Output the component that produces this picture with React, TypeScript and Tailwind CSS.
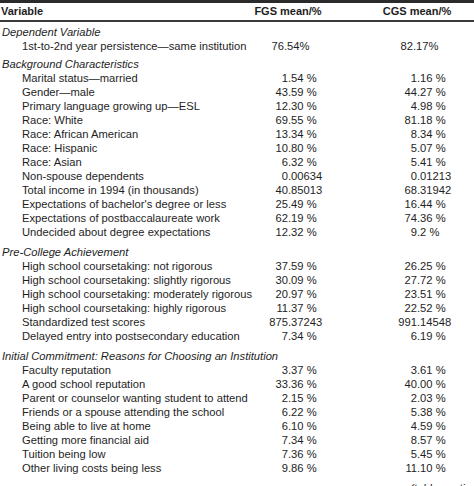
import React from "react";

type Row = { label: string; fgs: string; cgs: string; tight?: boolean };
type Section = { title: string; mt: string; rows: Row[] };

const sections: Section[] = [
  {
    title: "Dependent Variable",
    mt: "mt-[3px]",
    rows: [{ label: "1st-to-2nd year persistence—same institution", fgs: "76.54%", cgs: "82.17%", tight: true }],
  },
  {
    title: "Background Characteristics",
    mt: "mt-[4px]",
    rows: [
      { label: "Marital status—married", fgs: "1.54 %", cgs: "1.16 %" },
      { label: "Gender—male", fgs: "43.59 %", cgs: "44.27 %" },
      { label: "Primary language growing up—ESL", fgs: "12.30 %", cgs: "4.98 %" },
      { label: "Race: White", fgs: "69.55 %", cgs: "81.18 %" },
      { label: "Race: African American", fgs: "13.34 %", cgs: "8.34 %" },
      { label: "Race: Hispanic", fgs: "10.80 %", cgs: "5.07 %" },
      { label: "Race: Asian", fgs: "6.32 %", cgs: "5.41 %" },
      { label: "Non-spouse dependents", fgs: "0.00634", cgs: "0.01213" },
      { label: "Total income in 1994 (in thousands)", fgs: "40.85013", cgs: "68.31942" },
      { label: "Expectations of bachelor's degree or less", fgs: "25.49 %", cgs: "16.44 %" },
      { label: "Expectations of postbaccalaureate work", fgs: "62.19 %", cgs: "74.36 %" },
      { label: "Undecided about degree expectations", fgs: "12.32 %", cgs: "9.2 %" },
    ],
  },
  {
    title: "Pre-College Achievement",
    mt: "mt-[6px]",
    rows: [
      { label: "High school coursetaking: not rigorous", fgs: "37.59 %", cgs: "26.25 %" },
      { label: "High school coursetaking: slightly rigorous", fgs: "30.09 %", cgs: "27.72 %" },
      { label: "High school coursetaking: moderately rigorous", fgs: "20.97 %", cgs: "23.51 %" },
      { label: "High school coursetaking: highly rigorous", fgs: "11.37 %", cgs: "22.52 %" },
      { label: "Standardized test scores", fgs: "875.37243", cgs: "991.14548" },
      { label: "Delayed entry into postsecondary education", fgs: "7.34 %", cgs: "6.19 %" },
    ],
  },
  {
    title: "Initial Commitment: Reasons for Choosing an Institution",
    mt: "mt-[6px]",
    rows: [
      { label: "Faculty reputation", fgs: "3.37 %", cgs: "3.61 %" },
      { label: "A good school reputation", fgs: "33.36 %", cgs: "40.00 %" },
      { label: "Parent or counselor wanting student to attend", fgs: "2.15 %", cgs: "2.03 %" },
      { label: "Friends or a spouse attending the school", fgs: "6.22 %", cgs: "5.38 %" },
      { label: "Being able to live at home", fgs: "6.10 %", cgs: "4.59 %" },
      { label: "Getting more financial aid", fgs: "7.34 %", cgs: "8.57 %" },
      { label: "Tuition being low", fgs: "7.36 %", cgs: "5.45 %" },
      { label: "Other living costs being less", fgs: "9.86 %", cgs: "11.10 %" },
    ],
  },
];

function split(v: string): [string, string] {
  const i = v.indexOf(".");
  return [v.slice(0, i), v.slice(i)];
}

function DataRow({ row }: { row: Row }) {
  const [fi, ff] = split(row.fgs);
  const [ci, cf] = split(row.cgs);
  return (
    <div className="flex h-[14px] leading-[14px] whitespace-nowrap">
      <div className="w-[268px] shrink-0 pl-[22px]">{row.label}</div>
      <div className={row.tight ? "w-[16px] shrink-0 text-right" : "w-[20px] shrink-0 text-right"}>{fi}</div>
      <div className={row.tight ? "w-[113px] shrink-0" : "w-[109px] shrink-0"}>{ff}</div>
      <div className={row.tight ? "w-[16px] shrink-0 text-right" : "w-[20px] shrink-0 text-right"}>{ci}</div>
      <div className="flex-1">{cf}</div>
    </div>
  );
}

export default function App() {
  return (
    <div
      className="w-[474px] h-[486px] overflow-hidden bg-white text-[#1e1e1e] text-[11.2px]"
      style={{ fontFamily: '"Liberation Sans", Arial, sans-serif' }}
    >
      <div className="border-t-[3px] border-[#2b2b2b]">
        <div className="flex pt-[1px] pb-[2px] border-b-2 border-[#3a3a3a] text-[11px] font-bold leading-[14px] whitespace-nowrap">
          <div className="flex-1 pl-[1px]">Variable</div>
          <div className="w-[80px] text-center">FGS mean/%</div>
          <div className="w-[49px]" />
          <div className="w-[80px] text-center">CGS mean/%</div>
          <div className="w-[17px]" />
        </div>
      </div>
      {sections.map((s) => (
        <div key={s.title} className={s.mt}>
          <div className="h-[14px] leading-[14px] pl-[2px] italic whitespace-nowrap">{s.title}</div>
          {s.rows.map((r) => (
            <DataRow key={r.label} row={r} />
          ))}
        </div>
      ))}
      <div className="mt-[6px] h-[14px] leading-[14px] pl-[410px] italic whitespace-nowrap">(table continues)</div>
    </div>
  );
}
